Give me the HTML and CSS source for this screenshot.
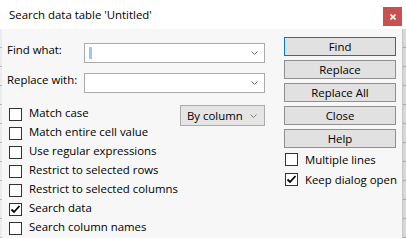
FILE: index.html
```html
<!DOCTYPE html>
<html>
<head>
<meta charset="utf-8">
<link rel="stylesheet" href="styles.css">
</head>
<body>
<div class="window">
  <div class="titlebar">
    <span class="title">Search data table 'Untitled'</span>
    <span class="close"><svg width="6" height="6" viewBox="0 0 6 6"><path d="M0.5 0.5 L5.5 5.5 M5.5 0.5 L0.5 5.5" stroke="#fff" stroke-width="1.6" fill="none"/></svg></span>
  </div>
  <div class="main">
    <div class="lstrip"></div>
    <div class="content">
      <div class="left">
        <div class="field">
          <span class="flabel">Find what:</span>
          <span class="combo"><span class="caret"></span><svg class="chev" width="7" height="4" viewBox="0 0 7 4"><path d="M0.5 0.5 L3.5 3.5 L6.5 0.5" stroke="#6d6d6d" stroke-width="1" fill="none"/></svg></span>
        </div>
        <div class="field">
          <span class="flabel">Replace with:</span>
          <span class="combo"><svg class="chev" width="7" height="4" viewBox="0 0 7 4"><path d="M0.5 0.5 L3.5 3.5 L6.5 0.5" stroke="#6d6d6d" stroke-width="1" fill="none"/></svg></span>
        </div>
        <div class="options">
          <div class="checks">
            <div class="crow"><span class="box"></span><span class="ctext">Match case</span></div>
            <div class="crow"><span class="box"></span><span class="ctext">Match entire cell value</span></div>
            <div class="crow"><span class="box"></span><span class="ctext">Use regular expressions</span></div>
            <div class="crow"><span class="box"></span><span class="ctext">Restrict to selected rows</span></div>
            <div class="crow"><span class="box"></span><span class="ctext">Restrict to selected columns</span></div>
            <div class="crow"><span class="box"><svg width="11" height="11" viewBox="0 0 11 11"><path d="M1.5 5.5 L4 8 L9.5 2" stroke="#000" stroke-width="1.8" fill="none"/></svg></span><span class="ctext">Search data</span></div>
            <div class="crow"><span class="box"></span><span class="ctext">Search column names</span></div>
          </div>
          <div class="select"><span>By column</span><svg class="chev2" width="7" height="4" viewBox="0 0 7 4"><path d="M0.5 0.5 L3.5 3.5 L6.5 0.5" stroke="#7a7a7a" stroke-width="1" fill="none"/></svg></div>
        </div>
      </div>
      <div class="right">
        <div class="btn focus">Find</div>
        <div class="btn">Replace</div>
        <div class="btn">Replace All</div>
        <div class="btn">Close</div>
        <div class="btn">Help</div>
        <div class="rchecks">
          <div class="rrow"><span class="box"></span><span class="ctext">Multiple lines</span></div>
          <div class="rrow"><span class="box"><svg width="11" height="11" viewBox="0 0 11 11"><path d="M1.5 5.5 L4 8 L9.5 2" stroke="#000" stroke-width="1.8" fill="none"/></svg></span><span class="ctext">Keep dialog open</span></div>
        </div>
      </div>
    </div>
    <div class="rstrip"></div>
  </div>
</div>
</body>
</html>
```
FILE: styles.css
```css
html, body {
  margin: 0;
  padding: 0;
  width: 406px;
  height: 238px;
  overflow: hidden;
  background: #ffffff;
}
body {
  font-family: "Open Sans", "Noto Sans", sans-serif;
  font-size: 11.4px;
  color: #000;
}
.window {
  display: flex;
  flex-direction: column;
  height: 238px;
}
.titlebar {
  height: 29px;
  display: flex;
  align-items: flex-start;
  background: #fff;
  flex: none;
}
.title {
  padding-left: 9px;
  padding-top: 7px;
  line-height: 16px;
}
.close {
  margin-left: auto;
  margin-top: 7px;
  margin-right: 4px;
  width: 19px;
  height: 19px;
  background: #c75050;
  display: flex;
  align-items: center;
  justify-content: center;
}
.close svg { display: block; }
.main {
  flex: 1;
  display: flex;
}
.lstrip {
  width: 2px;
  background: repeating-linear-gradient(to bottom, #ececec 0, #ececec 18px, #b8b8b8 18px, #b8b8b8 19px);
}
.rstrip {
  width: 3px;
  border-left: 1px solid #c4c4c4;
  background: repeating-linear-gradient(to bottom, #d7d7d7 0, #d7d7d7 18px, #a8a8a8 18px, #a8a8a8 19px);
}
.content {
  flex: 1;
  background: #f7f7f7;
  display: flex;
  gap: 19px;
  padding: 8px 6px 0 5px;
}
.left {
  width: 258px;
  padding-top: 6px;
}
.field {
  display: flex;
  height: 20px;
}
.field + .field {
  margin-top: 10px;
}
.flabel {
  width: 77px;
  line-height: 13px;
  white-space: nowrap;
}
.combo {
  flex: 1;
  box-sizing: border-box;
  height: 20px;
  border: 1px solid #ababab;
  background: #fff;
  display: flex;
  align-items: center;
  padding-left: 4px;
  padding-right: 6px;
}
.caret {
  width: 3px;
  height: 12px;
  background: #9cc8ee;
}
.chev {
  margin-left: auto;
  display: block;
}
.options {
  margin-top: 12px;
  display: flex;
  align-items: flex-start;
}
.checks {
  padding-left: 2px;
}
.crow {
  height: 19px;
  display: flex;
  align-items: flex-start;
  white-space: nowrap;
}
.box {
  box-sizing: border-box;
  width: 13px;
  height: 13px;
  border: 1px solid #333;
  background: #fff;
  flex: none;
  display: flex;
  align-items: center;
  justify-content: center;
}
.box svg { display: block; }
.crow .box {
  margin-top: 3px;
}
.ctext {
  margin-left: 7px;
  line-height: 15px;
}
.select {
  margin-left: auto;
  box-sizing: border-box;
  width: 85px;
  height: 21px;
  background: #e5e5e5;
  border: 1px solid #acacac;
  display: flex;
  align-items: center;
  padding-left: 6px;
  padding-right: 7px;
  white-space: nowrap;
}
.chev2 {
  margin-left: auto;
  display: block;
}
.right {
  width: 112px;
  display: flex;
  flex-direction: column;
  gap: 4px;
}
.btn {
  box-sizing: border-box;
  height: 19px;
  background: #e1e1e1;
  border: 1px solid #8f8f8f;
  display: flex;
  align-items: center;
  justify-content: center;
  line-height: 15px;
}
.btn.focus {
  border-color: #0078d7;
}
.rchecks {
  margin-top: 0;
  display: flex;
  flex-direction: column;
  gap: 6px;
  padding-left: 1px;
}
.rrow {
  height: 14px;
  display: flex;
  align-items: center;
  white-space: nowrap;
}
.rrow .ctext {
  margin-left: 7px;
}
```
